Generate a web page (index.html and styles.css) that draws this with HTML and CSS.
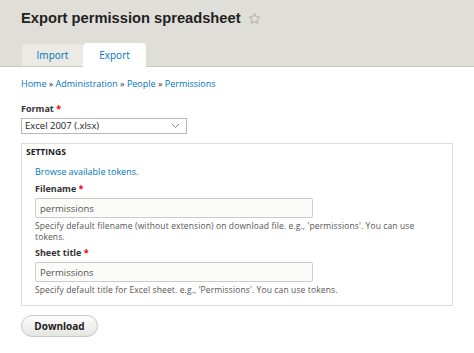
FILE: index.html
```html
<!DOCTYPE html>
<html lang="en">
<head>
    <meta charset="UTF-8">
    <title>Export permission spreadsheet</title>
    <link rel="stylesheet" href="styles.css">
</head>
<body>
    <header class="page-header">
        <h1 class="page-title">Export permission spreadsheet
            <svg class="star" width="13" height="13" viewBox="0 0 24 24">
                <path d="M12 2.5l2.9 6.3 6.9.7-5.2 4.6 1.5 6.8L12 17.4l-6.1 3.5 1.5-6.8-5.2-4.6 6.9-.7z" fill="none" stroke="#a8a69e" stroke-width="1.6" stroke-linejoin="round"/>
            </svg>
        </h1>
        <ul class="tabs">
            <li><a href="#">Import</a></li>
            <li class="active"><a href="#">Export</a></li>
        </ul>
    </header>

    <div class="content">
        <nav class="breadcrumb">
            <a href="#">Home</a> » <a href="#">Administration</a> » <a href="#">People</a> » <a href="#">Permissions</a>
        </nav>

        <div class="form-item">
            <label>Format <span class="req">*</span></label>
            <div class="select">
                <span>Excel 2007 (.xlsx)</span>
                <svg width="9" height="6" viewBox="0 0 9 6"><path d="M1 1l3.5 3.5L8 1" fill="none" stroke="#888" stroke-width="1"/></svg>
            </div>
        </div>

        <fieldset class="settings">
            <div class="legend">SETTINGS</div>
            <div class="fieldset-body">
                <a class="tokens" href="#">Browse available tokens.</a>

                <div class="form-item">
                    <label>Filename <span class="req">*</span></label>
                    <input class="text" type="text" value="permissions">
                    <div class="desc">Specify default filename (without extension) on download file. e.g., 'permissions'. You can use tokens.</div>
                </div>

                <div class="form-item">
                    <label>Sheet title <span class="req">*</span></label>
                    <input class="text" type="text" value="Permissions">
                    <div class="desc">Specify default title for Excel sheet. e.g., 'Permissions'. You can use tokens.</div>
                </div>
            </div>
        </fieldset>

        <button class="button">Download</button>
    </div>
</body>
</html>
```

FILE: styles.css
```css
body {
    margin: 0;
    font-family: "Open Sans", "DejaVu Sans", sans-serif;
    font-size: 9.5px;
    line-height: 12px;
    color: #333;
    background: #fff;
}

a {
    color: #0074bd;
    text-decoration: none;
}

.page-header {
    background: #dfded8;
    border-bottom: 1px solid #c9c7c0;
    padding: 8px 0 0 21px;
}

.page-title {
    margin: 0 0 16px;
    font-family: "Liberation Sans", Arial, sans-serif;
    font-size: 14.7px;
    font-weight: bold;
    color: #222;
    height: 20px;
    line-height: 20px;
    display: flex;
    align-items: center;
}

.star {
    margin-left: 7px;
}

.tabs {
    list-style: none;
    margin: 0;
    padding: 0 0 0 1px;
    display: flex;
    align-items: flex-end;
    height: 22px;
}

.tabs li a {
    display: block;
    width: 61px;
    height: 22px;
    line-height: 22px;
    text-align: center;
    background: #ebeae5;
    border-radius: 4px 4px 0 0;
    font-size: 10px;
}

.tabs li.active a {
    background: #fff;
    width: 63px;
    height: 24px;
    line-height: 24px;
    margin-bottom: -1px;
}

.content {
    padding: 10px 21px 10px 21px;
}

.breadcrumb {
    font-size: 9px;
    line-height: 14px;
    color: #333;
    margin-bottom: 12px;
}

.form-item label {
    display: block;
    font-weight: bold;
    font-size: 9px;
    line-height: 12px;
    margin-bottom: 3px;
}

.req {
    color: #e00;
}

.form-item .select {
    box-sizing: border-box;
    width: 166px;
    height: 16px;
    border: 1px solid #b8b8b8;
    padding: 0 6px 0 3px;
    display: flex;
    align-items: center;
    justify-content: space-between;
    font-size: 9.5px;
    color: #222;
}

.form-item label + .select {
    margin-top: 0;
}

.settings {
    margin: 9px 0 0;
    padding: 0;
    border: 1px solid #ddd;
    min-width: 0;
}

.legend {
    font-weight: bold;
    font-size: 8.5px;
    padding: 2px 0 0 4px;
    color: #222;
}

.fieldset-body {
    padding: 8px 13px 10px 13px;
}

.tokens {
    display: block;
    font-size: 9px;
    margin-bottom: 5px;
}

.fieldset-body .form-item {
    margin-bottom: 5px;
}

.fieldset-body .form-item:last-child {
    margin-bottom: 0;
}

input.text {
    display: block;
    box-sizing: border-box;
    width: 278px;
    height: 20px;
    margin: 0;
    border: 1px solid #ccc;
    border-radius: 2px;
    background: #fbfbf9;
    padding: 0 4px;
    font-family: inherit;
    font-size: 9.5px;
    color: #555;
}

.desc {
    font-size: 8.5px;
    color: #555;
    margin-top: 2px;
    line-height: 11px;
    letter-spacing: 0.12px;
}

.button {
    display: block;
    margin-top: 9px;
    width: 77px;
    height: 22px;
    border: 1px solid #c8c8c8;
    border-radius: 12px;
    background: linear-gradient(#fdfdfd, #e4e4e0);
    font-family: inherit;
    font-weight: bold;
    font-size: 10px;
    color: #222;
}
```
